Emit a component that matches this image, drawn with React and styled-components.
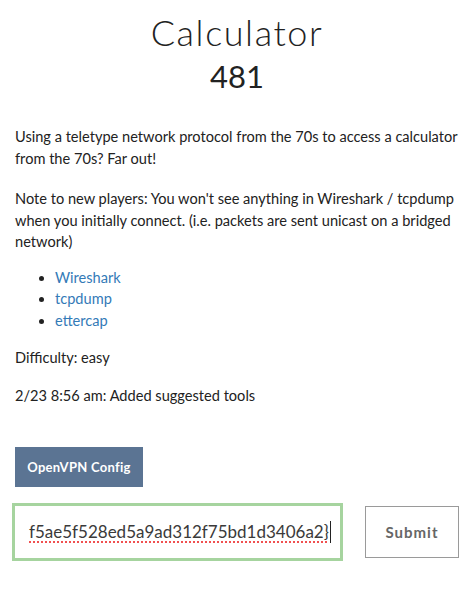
import React from "react";
import styled, { createGlobalStyle } from "styled-components";

const Global = createGlobalStyle`
  html, body { margin: 0; padding: 0; background: #fff; }
  body { font-family: Lato, "Open Sans", sans-serif; color: #222; }
`;

const Page = styled.div`
  padding: 0 8px 0 15px;
  width: 474px;
  box-sizing: border-box;
`;

const Title = styled.h1`
  margin: 0 7px 0 0;
  padding-top: 10px;
  text-align: center;
  font-family: Lato, sans-serif;
  font-weight: 300;
  font-size: 36px;
  letter-spacing: 1.6px;
  line-height: 44px;
  color: #222;
`;

const Points = styled.h2`
  margin: 3px 7px 0 0;
  text-align: center;
  font-weight: 400;
  font-size: 31px;
  line-height: 38px;
  color: #222;
`;

const Para = styled.p`
  margin: ${(p) => p.$top || 17}px 0 0;
  font-size: 14.6px;
  line-height: 21.5px;
`;

const List = styled.ul`
  margin: 14px 0 0;
  padding-left: 40px;
  font-size: 14.6px;
  line-height: 21.7px;
`;

const Link = styled.a`
  color: #337ab7;
  text-decoration: none;
`;

const ConfigButton = styled.button`
  margin-top: 40px;
  width: 128px;
  height: 40px;
  border: none;
  background: #5b7493;
  color: #fff;
  font-family: Lato, sans-serif;
  font-weight: 700;
  font-size: 13px;
  letter-spacing: 0.3px;
  cursor: pointer;
  display: block;
`;

const Form = styled.div`
  margin-top: 16px;
  margin-left: -3px;
  display: flex;
  align-items: center;
  gap: 22px;
`;

const FlagBox = styled.div`
  width: 331px;
  height: 58px;
  box-sizing: border-box;
  border: 3px solid #a6d49f;
  display: flex;
  align-items: center;
  padding-left: 14px;
  overflow: hidden;
`;

const FlagText = styled.span`
  font-family: Lato, sans-serif;
  font-size: 17px;
  color: #3a3a3a;
  white-space: nowrap;
  text-decoration: underline dotted #e33;
  text-underline-offset: 4px;
`;

const Caret = styled.span`
  display: inline-block;
  width: 1px;
  height: 22px;
  background: #222;
  margin-left: 1px;
  vertical-align: middle;
`;

const SubmitButton = styled.button`
  width: 94px;
  height: 52px;
  background: #fff;
  border: 1px solid #9a9a9a;
  color: #666;
  font-family: Lato, sans-serif;
  font-weight: 700;
  font-size: 15px;
  letter-spacing: 1px;
  cursor: pointer;
`;

export default function App() {
  return (
    <>
      <Global />
      <Page>
        <Title>Calculator</Title>
        <Points>481</Points>
        <Para $top={31}>
          Using a teletype network protocol from the 70s to access a calculator
          from the 70s? Far out!
        </Para>
        <Para $top={19}>
          Note to new players: You won't see anything in Wireshark / tcpdump
          when you initially connect. (i.e. packets are sent unicast on a
          bridged network)
        </Para>
        <List>
          <li><Link href="#">Wireshark</Link></li>
          <li><Link href="#">tcpdump</Link></li>
          <li><Link href="#">ettercap</Link></li>
        </List>
        <Para $top={15}>Difficulty: easy</Para>
        <Para>2/23 8:56 am: Added suggested tools</Para>
        <ConfigButton>OpenVPN Config</ConfigButton>
        <Form>
          <FlagBox>
            <FlagText>f5ae5f528ed5a9ad312f75bd1d3406a2}</FlagText>
            <Caret />
          </FlagBox>
          <SubmitButton>Submit</SubmitButton>
        </Form>
      </Page>
    </>
  );
}
